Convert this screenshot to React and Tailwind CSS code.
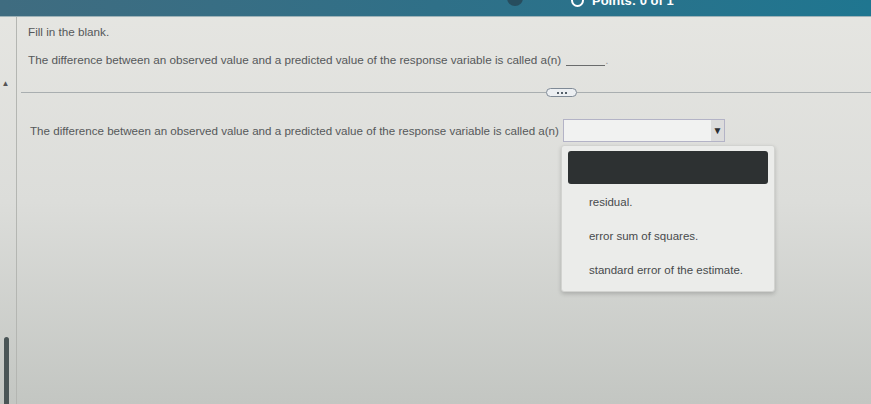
import { useState } from 'react';

const question =
  'The difference between an observed value and a predicted value of the response variable is called a(n)';

const choices = ['residual.', 'error sum of squares.', 'standard error of the estimate.'];

export default function App() {
  const [open] = useState(true);

  return (
    <div className="h-[404px] w-[871px] overflow-hidden flex flex-col bg-gradient-to-b from-[#e6e6e2] via-[#dcddda] to-[#c3c6c2] font-['Liberation_Sans',Arial,sans-serif] text-[#55585a]">
      {/* Top bar, mostly cropped */}
      <div className="h-[17px] shrink-0 overflow-hidden bg-gradient-to-r from-[#3f6c80] via-[#2f7088] to-[#1f7690] border-b border-[#9fb3b8] relative">
        <div className="absolute left-[507px] -top-[10px] w-[16px] h-[16px] rounded-full bg-[#274d5e]" />
        <div className="absolute left-[571px] -top-[6px] flex items-center gap-[8px] text-white">
          <span className="w-[13px] h-[13px] rounded-full border-2 border-white" />
          <span className="text-[13px] font-bold leading-none">Points: 0 of 1</span>
        </div>
      </div>

      <div className="flex flex-1">
        {/* Left gutter */}
        <div className="w-[16px] shrink-0 flex flex-col items-center">
          <span className="mt-[63px] text-[8px] leading-none text-[#555] -ml-[5px]">▲</span>
          <div className="mt-auto w-[5px] h-[67px] -ml-[3px] rounded-t-full bg-[#4a5556]" />
        </div>

        <div className="flex-1 border-l border-[#b4b6b2] flex flex-col">
          <div className="pl-[11px] pt-[9px]">
            <p className="text-[11.7px] leading-[12px]">Fill in the blank.</p>
            <p className="mt-[16px] text-[11.7px] leading-[12px] flex items-end">
              {question}
              <span className="ml-[5px] w-[39px] border-b border-[#6a6c6c]" />
              <span className="text-[#9a9a9a]">.</span>
            </p>
          </div>

          {/* Divider with collapse handle */}
          <div className="mt-[22px] ml-[4px] flex items-center">
            <div className="w-[525px] border-t border-[#a9aeb0]" />
            <div className="w-[31px] h-[9px] rounded-full border border-[#7f8a96] bg-[#eceff2] flex items-center justify-center gap-[2px]">
              <span className="w-[2px] h-[2px] bg-[#55606a]" />
              <span className="w-[2px] h-[2px] bg-[#55606a]" />
              <span className="w-[2px] h-[2px] bg-[#55606a]" />
            </div>
            <div className="flex-1 border-t border-[#a9aeb0]" />
          </div>

          <div className="pl-[13px] mt-[22px] flex items-start gap-[4px]">
            <p className="mt-[6px] text-[11.6px] leading-[12px]">{question}</p>
            <div className="flex flex-col">
              <div className="w-[162px] h-[23px] border border-[#b3b3c6] bg-[#f1f2f1] flex justify-end">
                <div className="w-[13px] h-[21px] bg-[#dcdcdc] flex items-center justify-center text-[10px] text-[#2c2f33]">
                  ▼
                </div>
              </div>
              {open && (
                <div className="-ml-[2px] mt-[3px] w-[214px] rounded-[3px] bg-[#ebecea] border border-[#d2d3d0] shadow-[0_2px_4px_rgba(0,0,0,0.18)] px-[6px] pt-[5px] pb-[4px]">
                  <div className="h-[33px] rounded-[3px] bg-[#2d3132]" />
                  <ul className="pl-[21px]">
                    {choices.map((c, i) => (
                      <li
                        key={c}
                        className={`${i === 0 ? 'mt-[12px]' : 'mt-[11px]'} h-[23px] text-[11.5px] leading-[12px] text-[#474a4c]`}
                      >
                        {c}
                      </li>
                    ))}
                  </ul>
                </div>
              )}
            </div>
          </div>
        </div>
      </div>
    </div>
  );
}
